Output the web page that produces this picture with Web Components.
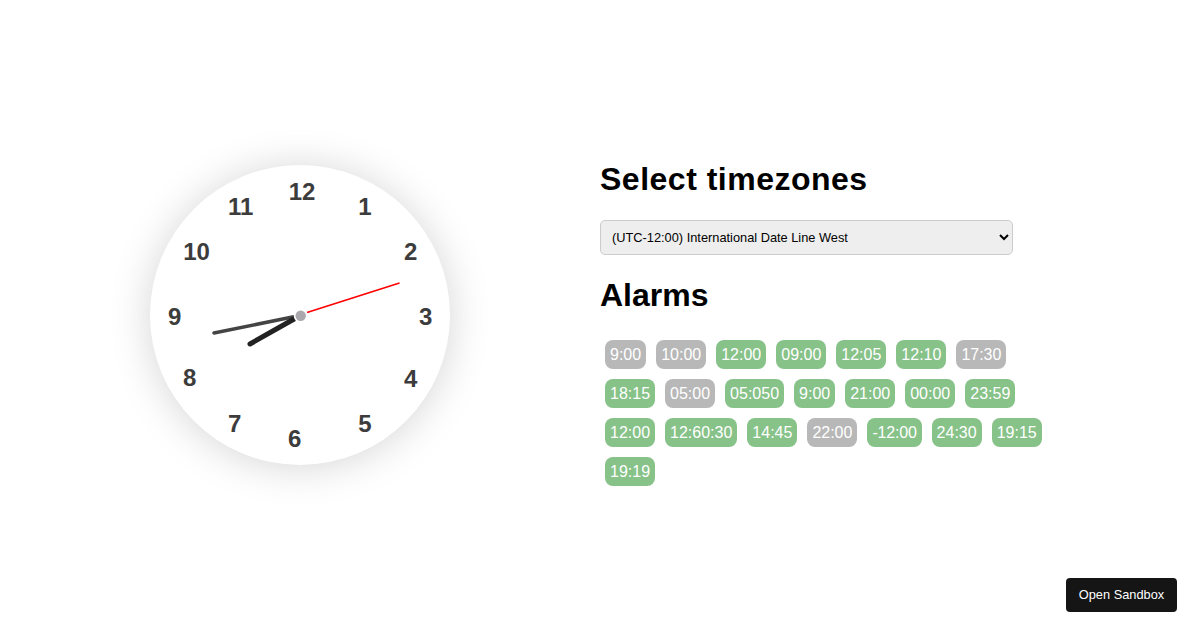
<!DOCTYPE html>
<html lang="en">
<head>
<meta charset="utf-8">
<title>World clock</title>
<style>
    html, body { margin: 0; height: 100%; background: #fff; font-family: "Liberation Sans", Arial, sans-serif; }
</style>
</head>
<body>
<alarm-app>
    <analog-clock slot="left"></analog-clock>
    <h-title slot="right" style="letter-spacing: 0.5px">Select timezones</h-title>
    <zone-select slot="right"></zone-select>
    <h-title slot="right" style="margin-bottom: 21px">Alarms</h-title>
    <alarm-list slot="right" items="9:00 10:00 12:00 09:00 12:05 12:10 17:30 18:15 05:00 05:050 9:00 21:00 00:00 23:59 12:00 12:60:30 14:45 22:00 -12:00 24:30 19:15 19:19" off="0 1 6 8 17"></alarm-list>
</alarm-app>
<sandbox-button>Open Sandbox</sandbox-button>

<script>
class AlarmApp extends HTMLElement {
    constructor() {
        super();
        this.attachShadow({ mode: 'open' });
        this.shadowRoot.innerHTML = `
            <style>
                :host {
                    display: grid;
                    grid-template-columns: 600px 600px;
                    height: 630px;
                    align-items: center;
                }
                .left { display: flex; justify-content: center; }
                .right { width: 450px; padding-top: 21px; }
            </style>
            <div class="left"><slot name="left"></slot></div>
            <div class="right"><slot name="right"></slot></div>
        `;
    }
}

class HTitle extends HTMLElement {
    constructor() {
        super();
        this.attachShadow({ mode: 'open' });
        this.shadowRoot.innerHTML = `
            <style>
                :host {
                    display: block;
                    font-size: 32px;
                    font-weight: bold;
                    line-height: 37px;
                    color: #000;
                    margin-bottom: 22px;
                }
            </style>
            <slot></slot>
        `;
    }
}

class ZoneSelect extends HTMLElement {
    constructor() {
        super();
        this.attachShadow({ mode: 'open' });
        this.shadowRoot.innerHTML = `
            <style>
                :host { display: block; margin-bottom: 22px; }
                select {
                    display: block;
                    width: 413px;
                    height: 35px;
                    padding: 0 7px;
                    font-family: "Liberation Sans", Arial, sans-serif;
                    font-size: 12.8px;
                    color: #000;
                    background-color: #eee;
                    border: 1px solid #ccc;
                    border-radius: 5px;
                }
            </style>
            <select>
                <option>(UTC-12:00) International Date Line West</option>
                <option>(UTC-11:00) Coordinated Universal Time-11</option>
                <option>(UTC-10:00) Hawaii</option>
            </select>
        `;
    }
}

class AlarmList extends HTMLElement {
    constructor() {
        super();
        this.attachShadow({ mode: 'open' });
    }

    connectedCallback() {
        const items = this.getAttribute('items').split(' ');
        const off = this.getAttribute('off').split(' ').map(Number);
        this.shadowRoot.innerHTML = `
            <style>
                :host { display: flex; flex-wrap: wrap; }
                span {
                    margin: 5px;
                    padding: 5px;
                    height: 19px;
                    line-height: 19px;
                    font-size: 16px;
                    color: #fff;
                    background: #87c289;
                    border-radius: 8px;
                }
                span.off { background: #b8b8b8; }
                span.neg { letter-spacing: -0.2px; }
            </style>
            ${items.map((t, i) => `<span class="${off.includes(i) ? 'off' : ''} ${t[0] === '-' ? 'neg' : ''}">${t}</span>`).join('')}
        `;
    }
}

class AnalogClock extends HTMLElement {
    constructor() {
        super();
        this.attachShadow({ mode: 'open' });
    }

    connectedCallback() {
        // label centres, measured from the clock's top left corner
        const nums = [
            [12, 152, 27], [1, 215, 42], [2, 260.7, 87], [3, 275.7, 152],
            [4, 260.7, 213.7], [5, 215, 259], [6, 144.7, 274], [7, 84.7, 259],
            [8, 39.7, 213], [9, 24.7, 152], [10, 46.5, 87], [11, 90.7, 42]
        ];
        this.shadowRoot.innerHTML = `
            <style>
                :host {
                    display: block;
                    position: relative;
                    width: 300px;
                    height: 300px;
                    border-radius: 50%;
                    background: #fff;
                    box-shadow: 0 2px 40px rgba(0, 0, 0, 0.17);
                }
                span {
                    position: absolute;
                    transform: translate(-50%, -50%);
                    font-size: 24px;
                    font-weight: bold;
                    line-height: 28px;
                    color: #3c3c3c;
                }
                svg { position: absolute; left: 0; top: 0; }
            </style>
            ${nums.map(n => `<span style="left:${n[1]}px;top:${n[2]}px">${n[0]}</span>`).join('')}
            <svg width="300" height="300" viewBox="0 0 300 300">
                <line x1="64" y1="168" x2="145" y2="151.5" stroke="#444" stroke-width="3.5" stroke-linecap="round"/>
                <line x1="100" y1="179" x2="145" y2="153.5" stroke="#222" stroke-width="5" stroke-linecap="round"/>
                <line x1="157" y1="147.5" x2="249.5" y2="118" stroke="#f00" stroke-width="1.7"/>
                <circle cx="150.7" cy="150.7" r="7" fill="#fff"/>
                <circle cx="150.7" cy="150.7" r="5.2" fill="#aaa8ac"/>
            </svg>
        `;
    }
}

class SandboxButton extends HTMLElement {
    constructor() {
        super();
        this.attachShadow({ mode: 'open' });
        this.shadowRoot.innerHTML = `
            <style>
                :host {
                    position: fixed;
                    right: 23px;
                    bottom: 18px;
                    display: flex;
                    align-items: center;
                    justify-content: center;
                    box-sizing: border-box;
                    width: 111px;
                    height: 34px;
                    padding-bottom: 2px;
                    background: #151515;
                    border-radius: 4px;
                    color: #fff;
                    font-family: "Liberation Sans", Arial, sans-serif;
                    font-size: 12.8px;
                }
            </style>
            <slot></slot>
        `;
    }
}

customElements.define('alarm-app', AlarmApp);
customElements.define('h-title', HTitle);
customElements.define('zone-select', ZoneSelect);
customElements.define('alarm-list', AlarmList);
customElements.define('analog-clock', AnalogClock);
customElements.define('sandbox-button', SandboxButton);
</script>
</body>
</html>
